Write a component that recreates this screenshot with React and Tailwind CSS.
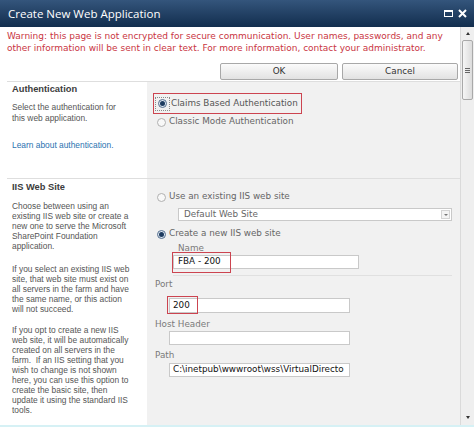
import React from 'react';

const verdana = { fontFamily: '"DejaVu Sans", Verdana, sans-serif' };
const tahoma = { fontFamily: '"Liberation Sans", Tahoma, sans-serif' };

const Radio = ({ checked }) => (
  <span className="w-[13px] h-[12px] flex items-center justify-center">
    <span
      className={`w-[9px] h-[9px] rounded-full border flex items-center justify-center ${
        checked ? 'border-[#56708f] bg-[#dde6f0]' : 'border-[#b0b0b0] bg-[#f8f8f8]'
      }`}
    >
      {checked && <span className="w-[5px] h-[5px] rounded-full bg-[#1d3b5f]" />}
    </span>
  </span>
);

const Field = ({ className, children }) => (
  <div
    className={`bg-white border border-[#c9c9c9] flex items-center pl-[3px] overflow-hidden whitespace-nowrap text-[8.8px] text-[#111] ${className}`}
    style={verdana}
  >
    {children}
  </div>
);

const Label = ({ className, children }) => (
  <div className={`text-[8.8px] leading-[12px] text-[#7a7a7a] ${className}`} style={verdana}>
    {children}
  </div>
);

// red annotation frame drawn over a control
const Mark = ({ className }) => (
  <span className={`absolute ring-1 ring-inset ring-[#cc4450] ${className}`} />
);

const Scrollbar = () => (
  <div className="w-[14px] bg-[#efefef] border-l border-[#dadada] flex flex-col items-center">
    <div className="h-[13px] flex items-center justify-center">
      <span className="w-0 h-0 border-l-[2.5px] border-r-[2.5px] border-b-[3px] border-l-transparent border-r-transparent border-b-[#333]" />
    </div>
    <div className="w-[11px] h-[60px] rounded-[2px] border border-[#a9a9a9] bg-linear-to-r from-[#f6f6f6] to-[#dcdcdc] flex flex-col items-center justify-center gap-[1px]">
      <span className="w-[5px] h-px bg-[#666]" />
      <span className="w-[5px] h-px bg-[#666]" />
      <span className="w-[5px] h-px bg-[#666]" />
    </div>
    <div className="flex-1" />
    <div className="h-[16px] flex items-center justify-center">
      <span className="w-0 h-0 border-l-[2.5px] border-r-[2.5px] border-t-[3px] border-l-transparent border-r-transparent border-t-[#333]" />
    </div>
  </div>
);

export default function App() {
  return (
    <div className="w-[474px] h-[427px] overflow-hidden flex flex-col bg-white">
      {/* dialog title bar */}
      <div className="h-[27px] shrink-0 bg-linear-to-b from-[#34557c] to-[#122e4e] flex items-center justify-between pl-[8px] pr-[7px]">
        <span className="text-[11.5px] text-white" style={{ fontFamily: '"Open Sans", sans-serif' }}>
          Create New Web Application
        </span>
        <div className="flex items-center gap-[5px]">
          <span className="w-[9px] h-[7px] border border-white border-t-2" />
          <svg width="9" height="9" viewBox="0 0 9 9">
            <path d="M1 1 L8 8 M8 1 L1 8" stroke="white" strokeWidth="2" />
          </svg>
        </div>
      </div>

      <div className="flex-1 flex min-h-0">
        <div className="flex-1 flex flex-col min-w-0">
          <p className="pt-[3px] pl-[7px] text-[9px] leading-[12px] text-[#c9353f] whitespace-nowrap" style={verdana}>
            Warning: this page is not encrypted for secure communication. User names, passwords, and any
            <br />
            other information will be sent in clear text. For more information, contact your administrator.
          </p>

          <div className="mt-[9px] flex justify-end gap-[4px] pr-[2px]">
            {['OK', 'Cancel'].map((t, i) => (
              <button
                key={t}
                className={`h-[17px] ${i === 0 ? 'w-[118px]' : 'w-[116px]'} rounded-[2px] border border-[#a8a8a8] bg-linear-to-b from-[#fbfbfb] to-[#e2e2e2] text-[8.8px] text-[#333]`}
                style={verdana}
              >
                {t}
              </button>
            ))}
          </div>

          <div className="mt-[1px] ml-[7px] flex-1 flex flex-col">
            {/* Authentication */}
            <div className="h-[97px] border-t border-[#dedede] flex">
              <div className="w-[140px] px-[5px] pt-[1px]">
                <div className="text-[9.3px] leading-[13px] font-bold text-[#3c3c3c]" style={tahoma}>
                  Authentication
                </div>
                <p className="mt-[6px] text-[8.4px] leading-[11px] text-[#555]" style={tahoma}>
                  Select the authentication for
                  <br />
                  this web application.
                </p>
                <p className="mt-[16px] text-[8.4px] leading-[11px] text-[#2a72b0]" style={tahoma}>
                  Learn about authentication.
                </p>
              </div>
              <div className="flex-1 bg-[#f1f1f1] pt-[6px] pl-[6px]">
                <div className="relative inline-flex items-center h-[21px] pl-[2px] pr-[4px]">
                  <span className="border border-dotted border-[#8a8a8a] flex">
                    <Radio checked />
                  </span>
                  <span className="ml-[1px] text-[8.8px] text-[#555]" style={verdana}>
                    Claims Based Authentication
                  </span>
                  <Mark className="inset-0" />
                </div>
                <div className="flex items-center h-[16px] pl-[2px]">
                  <Radio />
                  <span className="ml-[1px] text-[8.8px] text-[#666]" style={verdana}>
                    Classic Mode Authentication
                  </span>
                </div>
              </div>
            </div>

            {/* IIS Web Site */}
            <div className="flex-1 border-t border-[#dedede] flex">
              <div className="w-[140px] px-[5px] pt-[2px] text-[8.4px] leading-[10px] text-[#555] whitespace-nowrap" style={tahoma}>
                <div className="text-[9.3px] leading-[13px] font-bold text-[#3c3c3c]">IIS Web Site</div>
                <p className="mt-[7px]">
                  Choose between using an
                  <br />
                  existing IIS web site or create a
                  <br />
                  new one to serve the Microsoft
                  <br />
                  SharePoint Foundation
                  <br />
                  application.
                </p>
                <p className="mt-[13px]">
                  If you select an existing IIS web
                  <br />
                  site, that web site must exist on
                  <br />
                  all servers in the farm and have
                  <br />
                  the same name, or this action
                  <br />
                  will not succeed.
                </p>
                <p className="mt-[11px]">
                  If you opt to create a new IIS
                  <br />
                  web site, it will be automatically
                  <br />
                  created on all servers in the
                  <br />
                  farm.&nbsp; If an IIS setting that you
                  <br />
                  wish to change is not shown
                  <br />
                  here, you can use this option to
                  <br />
                  create the basic site, then
                  <br />
                  update it using the standard IIS
                  <br />
                  tools.
                </p>
              </div>

              <div className="flex-1 bg-[#f1f1f1] pt-[11px]">
                <div className="flex items-center h-[14px] pl-[8px]">
                  <Radio />
                  <span className="ml-[1px] text-[8.8px] text-[#666]" style={verdana}>
                    Use an existing IIS web site
                  </span>
                </div>
                <div
                  className="mt-[4px] ml-[31px] w-[274px] h-[13px] bg-white border border-[#c9c9c9] flex items-center justify-between pl-[5px] pr-[1px] text-[8.8px] text-[#666]"
                  style={verdana}
                >
                  Default Web Site
                  <span className="w-[9px] h-[9px] border border-[#d4d4d4] bg-[#f4f4f4] flex items-center justify-center">
                    <span className="w-0 h-0 border-l-[2px] border-r-[2px] border-t-[2px] border-l-transparent border-r-transparent border-t-[#777]" />
                  </span>
                </div>
                <div className="mt-[6px] flex items-center h-[14px] pl-[8px]">
                  <Radio checked />
                  <span className="ml-[1px] text-[8.8px] text-[#666]" style={verdana}>
                    Create a new IIS web site
                  </span>
                </div>
                <Label className="mt-[1px] ml-[31px]">Name</Label>
                <div className="relative mt-[1px] ml-[26px] w-[186px]">
                  <Field className="h-[14px] pl-[4px]">FBA - 200</Field>
                  <Mark className="-left-px -top-[3px] w-[59px] h-[21px]" />
                </div>
                <div className="mt-[6px] ml-[26px] w-[279px] h-px bg-[#e0e0e0]" />

                <Label className="mt-[2px] ml-[8px]">Port</Label>
                <div className="relative mt-[8px] ml-[22px] w-[181px]">
                  <Field className="h-[15px]">200</Field>
                  <Mark className="-left-[2px] -top-[2px] w-[31px] h-[18px]" />
                </div>
                <Label className="mt-[5px] ml-[8px]">Host Header</Label>
                <Field className="mt-[1px] ml-[22px] w-[181px] h-[14px]" />
                <Label className="mt-[4px] ml-[8px]">Path</Label>
                <Field className="mt-[2px] ml-[22px] w-[181px] h-[14px]">
                  C:\inetpub\wwwroot\wss\VirtualDirecto
                </Field>
              </div>
            </div>
          </div>
        </div>
        <Scrollbar />
      </div>
      <div className="h-[2px] shrink-0 bg-[#d6f1f5]" />
    </div>
  );
}
